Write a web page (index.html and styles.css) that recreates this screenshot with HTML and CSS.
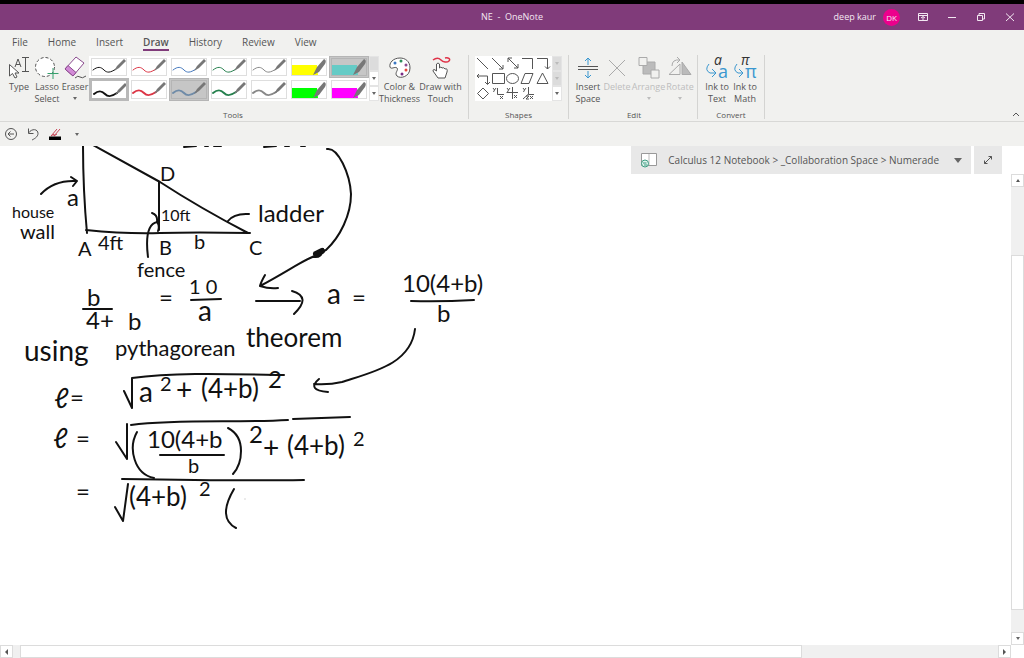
FILE: index.html
```html
<!DOCTYPE html>
<html lang="en">
<head>
<meta charset="utf-8">
<title>NE - OneNote</title>
<link rel="stylesheet" href="styles.css">
</head>
<body>
<svg class="defs" aria-hidden="true">
  <defs>
    <g id="pen"><path class="wave" d="M2 13C7 9 10 10 13 13S19 16 25 12"/><path class="barrel" d="M23 14L26 9L33 2L35 4L28 11Z"/></g>
    <g id="marker"><path class="fill" d="M0 8H26L27 18H0Z"/><path class="tip" d="M22 18L26 10L33 2Q36 3 34 7L28 15Z"/></g>
  </defs>
</svg>

<header class="titlebar">
  <span class="title">NE&nbsp; -&nbsp; OneNote</span>
  <div class="account"><span>deep kaur</span><span class="avatar">DK</span></div>
  <div class="window-buttons">
    <button aria-label="Ribbon display options"><svg width="12" height="12" viewBox="0 0 12 12"><path d="M1.500 2.500H10.500V9.500H1.500ZM1.500 4.500H10.500M6 9V6M4 7L6 5.500L8 7"/></svg></button>
    <button aria-label="Minimize"><svg width="12" height="12" viewBox="0 0 12 12"><path d="M2 6.500H10"/></svg></button>
    <button aria-label="Restore"><svg width="12" height="12" viewBox="0 0 12 12"><path d="M2.500 4.500H7.500V9.500H2.500ZM4 4V2.500H9.500V8H8"/></svg></button>
    <button aria-label="Close"><svg width="12" height="12" viewBox="0 0 12 12"><path d="M2 2.500L10 10M10 2.500L2 10"/></svg></button>
  </div>
</header>

<nav class="tabs">
  <button>File</button><button>Home</button><button>Insert</button><button class="active">Draw</button><button>History</button><button>Review</button><button>View</button>
</nav>

<section class="ribbon">
  <div class="group tools">
    <div class="items">
      <button class="tool"><svg width="24" height="24" viewBox="0 0 24 24"><path class="dk" fill="#fff" d="M2.500 8.500V20L5.500 17.500L8 22L10 21L8 17H12Z"/><path class="dk" d="M8 11L11 3L14 11M9 8.500H13M15 1.500H22M18.500 1.500V15.500M15 15.500H22"/></svg><span>Type</span></button>
      <button class="tool"><svg width="24" height="24" viewBox="0 0 24 24"><circle class="dk" cx="10" cy="11" r="9.500" fill="#fff" stroke-dasharray="3 2"/><path class="gn" d="M18 12V23M12.500 17.500H23.500"/></svg><span>Lasso<br>Select</span></button>
      <button class="tool"><svg width="24" height="24" viewBox="0 0 24 24"><path fill="#fff" stroke="#8a4a8e" d="M2 13L13 1L21 7L10 20Z"/><path fill="#d28bd6" stroke="#8a4a8e" d="M2 13L5 9.500L13 16.500L10 20Z"/><path class="dk" d="M12 22Q15 19 17 21T23 20"/></svg><span>Eraser</span><i class="arrow"></i></button>
      <div class="gallery">
        <div class="pens">
          <button class="pen black" aria-label="Black pen"><svg width="36" height="20"><use href="#pen"/></svg></button>
          <button class="pen red" aria-label="Red pen"><svg width="36" height="20"><use href="#pen"/></svg></button>
          <button class="pen blue" aria-label="Blue pen"><svg width="36" height="20"><use href="#pen"/></svg></button>
          <button class="pen green" aria-label="Green pen"><svg width="36" height="20"><use href="#pen"/></svg></button>
          <button class="pen gray" aria-label="Gray pen"><svg width="36" height="20"><use href="#pen"/></svg></button>
          <button class="pen yellow" aria-label="Yellow highlighter"><svg width="36" height="20"><use href="#marker"/></svg></button>
          <button class="pen teal chosen" aria-label="Teal highlighter"><svg width="36" height="20"><use href="#marker"/></svg></button>
          <button class="pen black thick outlined" aria-label="Thick black pen"><svg width="36" height="20"><use href="#pen"/></svg></button>
          <button class="pen red thick" aria-label="Thick red pen"><svg width="36" height="20"><use href="#pen"/></svg></button>
          <button class="pen steel thick chosen" aria-label="Thick blue pen"><svg width="36" height="20"><use href="#pen"/></svg></button>
          <button class="pen green thick" aria-label="Thick green pen"><svg width="36" height="20"><use href="#pen"/></svg></button>
          <button class="pen gray thick" aria-label="Thick gray pen"><svg width="36" height="20"><use href="#pen"/></svg></button>
          <button class="pen lime" aria-label="Green highlighter"><svg width="36" height="20"><use href="#marker"/></svg></button>
          <button class="pen magenta" aria-label="Magenta highlighter"><svg width="36" height="20"><use href="#marker"/></svg></button>
        </div>
        <div class="spin"><button class="off" aria-label="Previous pens"></button><button aria-label="Next pens"><i class="arrow"></i></button><button aria-label="All pens"><i class="arrow"></i></button></div>
      </div>
      <button class="tool wide"><svg width="24" height="24" viewBox="0 0 24 24"><path class="dk" fill="#fff" d="M12 2C5 2 1 7 2 11C3 14 7 10 9 12S6 17 9 20S22 21 22 12C22 5 17 2 12 2Z"/><circle cx="7" cy="7" r="1.500" fill="#3b78c3"/><circle cx="13" cy="5" r="1.500" fill="#2b8f5a"/><circle cx="18" cy="9" r="1.500" fill="#8a4a8e"/><circle cx="18" cy="14" r="1.500" fill="#e8443a"/><circle cx="14" cy="18" r="1.500" fill="#7a2c83"/></svg><span>Color &amp;<br>Thickness</span></button>
      <button class="tool wide"><svg width="24" height="24" viewBox="0 0 24 24"><path fill="none" stroke="#df3348" stroke-width="1.500" d="M4 4C8 1 10 2 12 4S18 7 20 5S19 1 16 2"/><path class="dk" fill="#fff" d="M7.500 15V8Q9 6 10.500 8V12Q12 10 13 12Q15 11 16 13Q19 12 18 16L16 22H9L4 15Q4 12 7.500 15Z"/></svg><span>Draw with<br>Touch</span></button>
    </div>
    <div class="caption">Tools</div>
  </div>

  <div class="group shapes">
    <div class="items">
      <div class="gallery">
        <svg class="shape-list" width="77" height="45" viewBox="0 0 77 45" role="img" aria-label="Shapes">
          <path d="M2 2L13 13M17 2L28 13M28 9V13H24M33 2L43 12M33 6V2H37M39 12H43V8M47 2.500H57.500V13M62 2.500H72.500V13M70 10.500L72.500 13L75 10.500M4 18L2 20L4 22M2 20H12.500V28M10 26L12.500 28.500L15 26M17.500 17.500H29.500V27.500H17.500ZM50 17.500H58L54 27.500H46ZM67.500 17L73 27.500H62ZM8 32L13.500 37.500L8 43L2.500 37.500Z"/>
          <ellipse cx="37.500" cy="22.500" rx="6" ry="5"/>
          <path d="M22.500 32V38.500H29M31.500 36.500H43M37.500 31V43M53.500 31V38.500H59M53.500 38L48 43M18 32L19.500 34L21 32M19.500 34L18.500 36M25 40L28 43M28 40L25 43M32 32L33.500 34L35 32M33.500 34L32.500 36M39 39L42 42M42 39L39 42M48 32L49.500 34L51 32M49.500 34L48.500 36M55 40L58 43M58 40L55 43M51 40H54L51 43H54"/>
        </svg>
        <div class="spin"><button class="off" aria-label="Previous shapes"><i class="arrow"></i></button><button class="off" aria-label="Next shapes"><i class="arrow"></i></button><button aria-label="All shapes"><i class="arrow"></i></button></div>
      </div>
    </div>
    <div class="caption">Shapes</div>
  </div>

  <div class="group edit">
    <div class="items">
      <button class="tool"><svg width="24" height="24" viewBox="0 0 24 24"><path class="dk" d="M2 10.500H22M2 13.500H22"/><path class="bl" d="M12 9V2M9 5L12 2L15 5M12 15V22M9 19L12 22L15 19"/></svg><span>Insert<br>Space</span></button>
      <button class="tool" disabled><svg width="24" height="24" viewBox="0 0 24 24"><path class="lt" d="M4 4L20 20M20 4L4 20"/></svg><span>Delete</span></button>
      <button class="tool mid" disabled><svg width="24" height="24" viewBox="0 0 24 24"><path class="lt" fill="#bbb" d="M6 6H18V18H6Z"/><path class="lt" fill="#f1f1ef" d="M2 1.500H10V9.500H2ZM14 14H22V22H14Z"/></svg><span>Arrange</span><i class="arrow"></i></button>
      <button class="tool" disabled><svg width="24" height="24" viewBox="0 0 24 24"><path class="lt" fill="none" d="M1 18.500L12 8V18.500ZM4 10Q4 3 12 4M9 1L12 4L9 7"/><path class="lt" fill="#bbb" d="M14 6L23 18.500H14Z"/></svg><span>Rotate</span><i class="arrow"></i></button>
    </div>
    <div class="caption">Edit</div>
  </div>

  <div class="group convert">
    <div class="items">
      <button class="tool"><svg width="24" height="24" viewBox="0 0 24 24"><text class="ink-glyph" x="9" y="9">a</text><text class="type-glyph" x="13" y="22">a</text><path class="bl" d="M4 8Q-1 14 5 17H10M7 13L11 17L7 21"/></svg><span>Ink to<br>Text</span></button>
      <button class="tool"><svg width="24" height="24" viewBox="0 0 24 24"><text class="ink-glyph" x="8" y="9">π</text><text class="type-glyph" x="12" y="22">π</text><path class="bl" d="M4 8Q-1 14 5 17H9M6 13L10 17L6 21"/></svg><span>Ink to<br>Math</span></button>
    </div>
    <div class="caption">Convert</div>
  </div>
  <button class="collapse" aria-label="Collapse ribbon"><svg width="8" height="6" viewBox="0 0 8 6"><path d="M1 5L4 2L7 5"/></svg></button>
</section>

<div class="quick">
  <button aria-label="Back"><svg width="14" height="14" viewBox="0 0 14 14"><circle cx="7" cy="7" r="5.500"/><path d="M10 7H4M6.500 4.500L4 7L6.500 9.500"/></svg></button>
  <button aria-label="Undo"><svg width="14" height="14" viewBox="0 0 14 14"><path d="M2.500 1.500V6.500H7.500M2.500 6C6 1 12 2 12 6.500C12 10 8 12 6 13"/></svg></button>
  <button aria-label="Pen color"><svg width="14" height="14" viewBox="0 0 14 14"><path stroke="#c84a5a" d="M3 9L9 2M6 9L12 2M3 9L6 7L6 9L9 7"/><path class="swatch" d="M1 9.500H13V13H1Z"/></svg></button>
  <button aria-label="Customize toolbar"><i class="arrow"></i></button>
</div>

<main class="work">
  <div class="page">
    <svg class="ink" width="500" height="400" viewBox="0 146 500 400" role="img" aria-label="Handwritten notes">
      <g class="strokes">
        <path d="M83 145Q83 190 87 233M93 145L160 182Q200 208 248 233M86 230Q125 234 160 233T250 233M159 182V230M41 194Q54 180 76 181M71 177L77 181L73 186M228 221Q234 213 249 214M152 213Q158 215 157 222M157 222Q144 225 148 257M157 222Q160 226 158 231"/>
        <path d="M184 147L196 146M205 146H208M214 146H221M264 147L276 146M285 146H289M301 146H305M327 149C338 147 350 174 351 194C351 215 340 237 326 250Q318 252 314 257Q322 258 323 249Q316 253 319 255C307 257 292 269 260 286M265 275Q261 282 260 286Q269 289 278 288"/>
        <path class="blot" d="M316 254L322 251"/>
        <path d="M83 309H112M191 300L221 299M256 301H300M292 291Q312 297 294 314M411 301Q440 302 474 300"/>
        <path d="M415 329C411 364 373 372 342 382Q329 385 314 384M319 379Q306 390 328 392"/>
        <path d="M124 391L132 408V378M132 378C175 372 230 374 284 375"/>
        <path d="M116 442L127 459V424M131 425C180 419 235 423 288 420M293 419Q320 418 350 417M137 432C128 448 134 474 154 478M228 428C247 438 242 464 233 474M160 455H224"/>
        <path d="M115 507L123 521L128 484M122 479C180 480 245 481 304 480M234 489Q217 518 236 528"/>
        <path class="dot" d="M245 499H245"/>
      </g>
      <g class="s16"><text x="12" y="218">house</text><text x="161" y="221">10ft</text></g>
      <g class="s20"><text x="20" y="239">wall</text><text x="160" y="181">D</text><text x="78" y="256">A</text><text x="98" y="250">4ft</text><text x="159" y="255">B</text><text x="194" y="249">b</text><text x="249" y="255">C</text><text x="137" y="277">fence</text><text x="189" y="294">1 0</text><text x="188" y="473">b</text><text x="160" y="391">2</text><text x="199" y="496">2</text><text x="353" y="446">2</text></g>
      <g class="s22"><text x="115" y="356">pythagorean</text></g>
      <g class="s24"><text x="67" y="206">a</text><text x="258" y="222">ladder</text><text x="87" y="306">b</text><text x="86" y="329">4+</text><text x="128" y="330">b</text><text x="159" y="306">=</text><text x="402" y="292">10(4+b)</text><text x="437" y="322">b</text><text x="268" y="388">2</text><text x="147" y="448">10(4+b</text><text x="249" y="443">2</text><text x="352" y="306">=</text><text x="70" y="406">=</text><text x="76" y="447">=</text><text x="76" y="500">=</text></g>
      <g class="s26"><text x="246" y="347">theorem</text><text x="201" y="398">(4+b)</text><text x="287" y="455">(4+b)</text><text x="129" y="506">(4+b)</text></g>
      <g class="s28"><text x="24" y="361">using</text><text x="198" y="321">a</text><text x="327" y="304">a</text><text x="54" y="408">ℓ</text><text x="53" y="448">ℓ</text><text x="139" y="402">a</text><text x="176" y="400">+</text><text x="263" y="458">+</text></g>
    </svg>
    <div class="location">
      <button class="crumb"><svg width="18" height="16" viewBox="0 0 18 16"><path fill="#fff" stroke="#999" d="M1.500 1.500H16.500V13.500H1.500Z"/><path stroke="#bbb" d="M9 2V13"/><circle cx="5" cy="11.500" r="3.500" fill="#dff2ec" stroke="#3a9b80"/><path fill="none" stroke="#3a9b80" d="M3 11H6.500M4 13H7"/></svg><span>Calculus 12 Notebook &gt; _Collaboration Space &gt; Numerade</span><i class="arrow big"></i></button>
      <button class="expand" aria-label="Full page view"><svg width="10" height="10" viewBox="0 0 10 10"><path d="M1.500 8.500L8.500 1.500M5.500 1.500H8.500V4.500M1.500 5.500V8.500H4.500"/></svg></button>
    </div>
  </div>
  <div class="vscroll"><button aria-label="Scroll up"><i class="arrow up"></i></button><div class="track"><div class="thumb"></div></div><button aria-label="Scroll down"><i class="arrow"></i></button></div>
  <div class="hscroll"><button aria-label="Scroll left"><i class="arrow left"></i></button><div class="track"><div class="thumb"></div></div><button aria-label="Scroll right"><i class="arrow right"></i></button></div>
</main>
</body>
</html>
```

FILE: styles.css
```css
* { box-sizing: border-box; }
body {
  margin: 0;
  height: 100vh;
  display: flex;
  flex-direction: column;
  overflow: hidden;
  background: #fff;
  color: #555;
  font: 10px/12px "Open Sans", "Noto Sans", sans-serif;
}
button {
  margin: 0;
  padding: 0;
  border: 0;
  background: none;
  color: inherit;
  font: inherit;
}
svg { display: block; flex: none; }
.defs { position: absolute; width: 0; height: 0; }

.arrow {
  width: 0;
  height: 0;
  border: 2px solid transparent;
  border-top: 3px solid #666;
  border-bottom: 0;
}
.arrow.big { border-width: 5px 4px 0; margin-left: 5px; }
.arrow.up { border-top: 0; border-bottom: 3px solid #555; }
.arrow.left { border: 3px solid transparent; border-left: 0; border-right-color: #555; }
.arrow.right { border: 3px solid transparent; border-right: 0; border-left-color: #555; }

.titlebar {
  display: grid;
  grid-template-columns: 1fr auto 1fr;
  align-items: center;
  height: 30px;
  border-top: 4px solid #000;
  background: #803b7a;
  color: #f3e8f2;
  font-size: 9px;
}
.title { grid-column: 2; grid-row: 1; }
.account {
  grid-column: 3;
  grid-row: 1;
  display: flex;
  justify-content: flex-end;
  align-items: center;
  gap: 7px;
  margin-right: 124px;
}
.avatar {
  width: 17px;
  height: 17px;
  border-radius: 50%;
  background: #ec008c;
  font-size: 8px;
  line-height: 17px;
  text-align: center;
}
.window-buttons {
  grid-column: 3;
  grid-row: 1;
  display: flex;
  justify-content: flex-end;
}
.window-buttons button { width: 29px; display: grid; place-items: center; }
.window-buttons svg { fill: none; stroke: #f3e8f2; }

.tabs {
  display: flex;
  gap: 20px;
  height: 25px;
  padding: 4px 12px;
  background: #f1f1ef;
}
.tabs button { height: 17px; border-bottom: 2px solid transparent; }
.tabs .active { border-color: #803b7a; font-weight: 600; }

.ribbon {
  display: flex;
  height: 67px;
  border-bottom: 1px solid #d8d8d6;
  background: #f1f1ef;
}
.group {
  display: flex;
  flex-direction: column;
  justify-content: space-between;
  border-right: 1px solid #d4d4d2;
  margin-bottom: 2px;
  padding: 1px 5px 0;
}
.items { display: flex; }
.caption { font-size: 8px; line-height: 9px; text-align: center; }
.tool {
  display: flex;
  flex-direction: column;
  align-items: center;
  width: 28px;
  font-size: 9px;
  line-height: 12px;
  white-space: nowrap;
}
.tool svg { margin-bottom: 1px; overflow: visible; }
.tool.wide { width: 41px; }
.tool.mid { width: 33px; }
.tool .arrow { margin-top: 4px; }
.tool:disabled { color: #bdbdbd; }
.tool:disabled .arrow { border-top-color: #bdbdbd; }
.dk { fill: none; stroke: #555; }
.dk[fill] { fill: #fff; }
.gn { fill: none; stroke: #35a06c; }
.bl { fill: none; stroke: #3a97cf; }
.lt { stroke: #aaa; }
.ink-glyph { fill: #333; font: italic 14px "Open Sans", sans-serif; }
.type-glyph { fill: #3a97cf; font: 18px "Open Sans", sans-serif; }
.tools { padding-right: 7px; }
.shapes { padding-right: 6px; padding-left: 6px; }
.edit { padding-left: 5px; padding-right: 3px; }
.edit .items { gap: 1px; }

.gallery { display: flex; height: 45px; background: #fff; }
.pens { display: grid; grid-template-columns: repeat(7, 40px); grid-template-rows: 22px 23px; }
.pen { display: grid; place-items: center; overflow: hidden; border: 1px solid #fff; outline: 1px solid #dedede; outline-offset: -3px; stroke-width: 1; }
.pen.thick { stroke-width: 2; }
.pen.chosen { background: #c6c6c6; border-color: #b5b5b5; outline-color: #b5b5b5; }
.pen.outlined { border: 3px solid #b9b9b9; outline: 0; }
.wave { fill: none; stroke: currentColor; stroke-linecap: round; }
.barrel, .tip { fill: #777; }
.fill { fill: currentColor; }
.black { color: #111; }
.red { color: #dc3545; }
.blue { color: #4478bd; }
.green { color: #25804d; }
.gray { color: #888; }
.steel { color: #6f8ba8; }
.yellow { color: #ff0; }
.teal { color: #65cbc6; }
.lime { color: #0f0; }
.magenta { color: #f0f; }
.spin { display: grid; grid-template-rows: repeat(3, 15px); width: 10px; }
.spin button { display: grid; place-items: center; border: 1px solid #e4e4e4; }
.spin .off { background: #dcdcdc; }
.spin .off .arrow { border-top-color: #bbb; }
.shape-list { fill: none; stroke: #555; }
.collapse { margin: auto 4px 4px auto; }
.collapse svg { fill: none; stroke: #555; }

.quick {
  display: flex;
  align-items: center;
  gap: 8px;
  height: 24px;
  padding: 0 4px;
  background: #f1f1ef;
}
.quick button { width: 14px; display: grid; place-items: center; }
.quick svg { fill: none; stroke: #555; }
.quick .swatch { fill: #000; stroke: none; }

.work {
  flex: 1;
  min-height: 0;
  display: grid;
  grid-template: 1fr 13px / 1fr 13px;
}
.page { position: relative; overflow: hidden; }
.ink { position: absolute; top: 0; left: 0; font-family: Lato, sans-serif; fill: #111; }
.strokes { fill: none; stroke: #111; stroke-width: 2; stroke-linecap: round; stroke-linejoin: round; }
.blot { stroke-width: 6; }
.dot { stroke: #999; stroke-width: 1; }
.s16 { font-size: 16px; }
.s20 { font-size: 20px; }
.s22 { font-size: 22px; }
.s24 { font-size: 24px; }
.s26 { font-size: 26px; }
.s28 { font-size: 28px; }
.location { display: flex; justify-content: flex-end; gap: 3px; height: 28px; margin-right: 9px; }
.crumb { display: flex; align-items: center; gap: 10px; padding: 0 9px; background: #e8e8e8; }
.expand { display: grid; place-items: center; width: 28px; background: #e8e8e8; }
.expand svg { fill: none; stroke: #555; }

.vscroll { display: flex; flex-direction: column; margin-top: 28px; }
.hscroll { display: flex; }
.track { flex: 1; display: flex; background: #f0f0f0; }
.vscroll .track { flex-direction: column; padding: 68px 0 22px; }
.hscroll .track { padding: 0 196px 0 7px; }
.thumb { flex: 1; border: 1px solid #dcdcdc; background: #fff; }
.vscroll button, .hscroll button { display: grid; place-items: center; width: 13px; height: 13px; border: 1px solid #dcdcdc; }
```
